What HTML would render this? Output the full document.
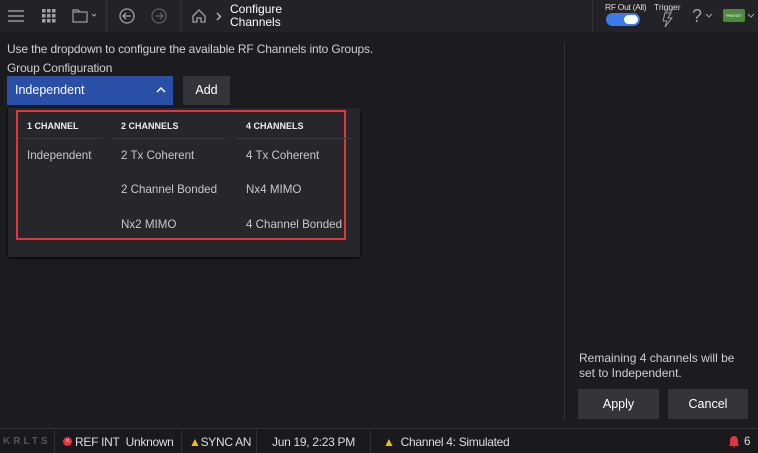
<!DOCTYPE html>
<html><head><style>
*{margin:0;padding:0;box-sizing:border-box}
body{width:758px;height:453px;background:#1c1b20;font-family:"Liberation Sans",sans-serif;color:#d8d8da;position:relative;overflow:hidden;font-size:11.6px}
.a{position:absolute}
.hdr{left:0;top:0;width:758px;height:32px;background:#232227}
.vd{width:1px;background:#333238}
.t{white-space:nowrap}
.btn{background:#35343b;color:#fff;text-align:center;font-size:12.5px}
.sb{font-size:12px;letter-spacing:-0.3px}
</style></head><body>
<div class="a hdr"></div>
<svg class="a" style="left:8px;top:9px" width="16" height="14"><g stroke="#9a9aa0" stroke-width="1.5"><line x1="0" y1="2" x2="16" y2="2"/><line x1="0" y1="7" x2="16" y2="7"/><line x1="0" y1="12" x2="16" y2="12"/></g></svg>
<svg class="a" style="left:42px;top:9px" width="14" height="14" fill="#a0a0a6"><rect x="0" y="0" width="3.5" height="3.5"/><rect x="5" y="0" width="3.5" height="3.5"/><rect x="10" y="0" width="3.5" height="3.5"/><rect x="0" y="5" width="3.5" height="3.5"/><rect x="5" y="5" width="3.5" height="3.5"/><rect x="10" y="5" width="3.5" height="3.5"/><rect x="0" y="10" width="3.5" height="3.5"/><rect x="5" y="10" width="3.5" height="3.5"/><rect x="10" y="10" width="3.5" height="3.5"/></svg>
<svg class="a" style="left:72px;top:8px" width="26" height="16" fill="none" stroke="#9a9aa0" stroke-width="1.2"><path d="M1 2h5l2 2h7v10H1z"/><path d="M1 4h7"/><path d="M20 6l2 2 2-2"/></svg>
<div class="a vd" style="left:106px;top:0;height:32px"></div>
<svg class="a" style="left:119px;top:8px" width="16" height="16" fill="none" stroke="#a0a0a6" stroke-width="1.3"><circle cx="8" cy="8" r="7"/><path d="M12 8H4M7 5L4 8l3 3"/></svg>
<svg class="a" style="left:151px;top:8px" width="16" height="16" fill="none" stroke="#5e5e64" stroke-width="1.3"><circle cx="8" cy="8" r="7"/><path d="M4 8h8M9 5l3 3-3 3"/></svg>
<div class="a vd" style="left:180px;top:0;height:32px"></div>
<svg class="a" style="left:191px;top:8px" width="16" height="16" fill="none" stroke="#a0a0a6" stroke-width="1.3"><path d="M2 8L8 2l6 6v6h-4v-4H6v4H2z"/></svg>
<svg class="a" style="left:216px;top:12px" width="6" height="9" fill="none" stroke="#c0c0c4" stroke-width="1.3"><path d="M1 1l3.5 3.5L1 8"/></svg>
<div class="a t" style="left:230px;top:3px;font-size:12px;color:#fff;line-height:13px">Configure<br>Channels</div>
<div class="a vd" style="left:592px;top:0;height:32px"></div>
<div class="a t" style="left:605px;top:2px;font-size:8.5px;color:#ddd;letter-spacing:-0.3px">RF Out (All)</div>
<div class="a" style="left:606px;top:13px;width:34px;height:13px;border-radius:7px;background:#3d7be8"></div>
<div class="a" style="left:624px;top:15px;width:14px;height:9px;border-radius:5px;background:#fff"></div>
<div class="a t" style="left:654px;top:2px;font-size:8.5px;color:#ddd">Trigger</div>
<svg class="a" style="left:661px;top:12px" width="12" height="16" fill="none" stroke="#a0a0a6" stroke-width="1"><path d="M4 1h6L7 6h4l-7 9 2-6H2z"/></svg>
<div class="a t" style="left:692px;top:6px;font-size:18px;color:#a0a0a6">?</div>
<svg class="a" style="left:705px;top:13px" width="8" height="5" fill="none" stroke="#a0a0a6"><path d="M1 1l3 3 3-3"/></svg>
<div class="a" style="left:723px;top:9px;width:22px;height:13px;background:#4d8a3e;border-radius:2px;font-size:4px;color:#fff;text-align:center;line-height:13px">PRESET</div>
<svg class="a" style="left:747px;top:13px" width="8" height="5" fill="none" stroke="#a0a0a6"><path d="M1 1l3 3 3-3"/></svg>

<div class="a t" style="left:7px;top:42px;font-size:12px;color:#d0d0d4;letter-spacing:-0.15px">Use the dropdown to configure the available RF Channels into Groups.</div>
<div class="a t" style="left:7px;top:61px;font-size:12px;color:#d0d0d4;letter-spacing:-0.15px">Group Configuration</div>
<div class="a" style="left:7px;top:76px;width:166px;height:29px;background:#2a4fa6"></div>
<div class="a t" style="left:15px;top:83px;font-size:12.5px;color:#fff">Independent</div>
<svg class="a" style="left:156px;top:86px" width="10" height="7" fill="none" stroke="#fff" stroke-width="1.5"><path d="M1 6l4-4 4 4"/></svg>
<div class="a btn" style="left:183px;top:76px;width:47px;height:29px;line-height:29px">Add</div>

<div class="a" style="left:8px;top:108px;width:352px;height:149px;background:#27262b;box-shadow:0 1px 2px #000"></div>
<div class="a" style="left:16px;top:110px;width:330px;height:130px;border:2px solid #e0373c"></div>
<div class="a" style="left:18px;top:138px;width:84px;height:1px;background:#3a393f"></div>
<div class="a" style="left:112px;top:138px;width:114px;height:1px;background:#3a393f"></div>
<div class="a" style="left:236px;top:138px;width:115px;height:1px;background:#3a393f"></div>
<div class="a t" style="left:27px;top:121px;font-size:9px;font-weight:bold;color:#eee">1 CHANNEL</div>
<div class="a t" style="left:121px;top:121px;font-size:9px;font-weight:bold;color:#eee">2 CHANNELS</div>
<div class="a t" style="left:246px;top:121px;font-size:9px;font-weight:bold;color:#eee">4 CHANNELS</div>
<div class="a t" style="left:27px;top:149px;color:#c8c8cc">Independent</div>
<div class="a t" style="left:121px;top:149px;color:#c8c8cc">2 Tx Coherent</div>
<div class="a t" style="left:121px;top:183px;color:#c8c8cc">2 Channel Bonded</div>
<div class="a t" style="left:121px;top:218px;color:#c8c8cc">Nx2 MIMO</div>
<div class="a t" style="left:246px;top:149px;color:#c8c8cc">4 Tx Coherent</div>
<div class="a t" style="left:246px;top:183px;color:#c8c8cc">Nx4 MIMO</div>
<div class="a t" style="left:246px;top:218px;color:#c8c8cc">4 Channel Bonded</div>

<div class="a vd" style="left:564px;top:42px;height:378px"></div>
<div class="a" style="left:579px;top:351px;font-size:12px;color:#d0d0d4;line-height:15px">Remaining 4 channels will be<br>set to Independent.</div>
<div class="a btn" style="left:578px;top:389px;width:81px;height:30px;line-height:30px">Apply</div>
<div class="a btn" style="left:668px;top:389px;width:80px;height:30px;line-height:30px">Cancel</div>

<div class="a" style="left:0;top:428px;width:758px;height:25px;background:#1a191d;border-top:1px solid #303035"></div>
<div class="a t" style="left:3px;top:436px;font-size:10px;color:#55545a;letter-spacing:3px;font-weight:bold">KRLTS</div>
<div class="a vd" style="left:54px;top:430px;height:23px"></div>
<div class="a" style="left:63px;top:437px;width:9px;height:9px;border-radius:50%;background:#e0373c;color:#fff;font-size:7px;line-height:9px;text-align:center">×</div>
<div class="a t sb" style="left:75px;top:435px;color:#ddd">REF INT&nbsp; Unknown</div>
<div class="a vd" style="left:181px;top:430px;height:23px"></div>
<div class="a t sb" style="left:189px;top:435px;color:#ddd"><span style="color:#f0c000">▲</span>SYNC AN</div>
<div class="a vd" style="left:256px;top:430px;height:23px"></div>
<div class="a t sb" style="left:272px;top:435px;color:#ddd">Jun 19, 2:23 PM</div>
<div class="a vd" style="left:370px;top:430px;height:23px"></div>
<div class="a t sb" style="left:383px;top:435px;color:#ddd"><span style="color:#f0c000">▲</span>&nbsp; Channel 4: Simulated</div>
<svg class="a" style="left:729px;top:436px" width="10" height="12" fill="#e0373c"><path d="M5 0c3 0 4 3 4 5v3l1 2H0l1-2V5c0-2 1-5 4-5zM3.5 10.5h3L5 12z"/></svg>
<div class="a t" style="left:744px;top:435px;color:#ddd">6</div>
</body></html>
